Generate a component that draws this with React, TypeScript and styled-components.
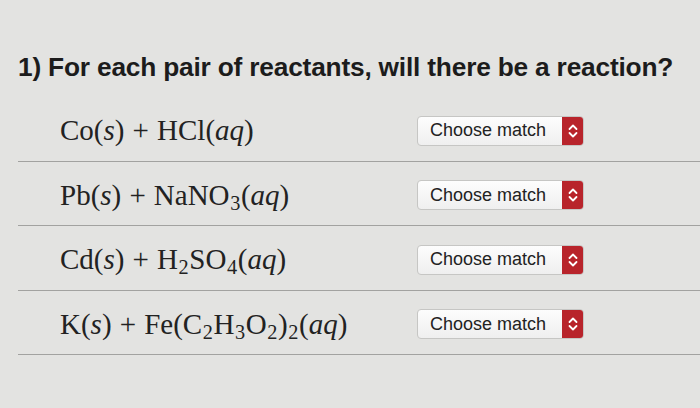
import React from 'react';
import styled, { createGlobalStyle } from 'styled-components';

const GlobalStyle = createGlobalStyle`
  html, body {
    margin: 0;
    padding: 0;
    background: #e3e3e1;
  }
`;

type Part = { t: string; it?: boolean; sub?: boolean; op?: boolean };

const rows: Part[][] = [
  [
    { t: 'Co(' }, { t: 's', it: true }, { t: ')' }, { t: '+', op: true }, { t: 'HCl(' },
    { t: 'aq', it: true }, { t: ')' },
  ],
  [
    { t: 'Pb(' }, { t: 's', it: true }, { t: ')' }, { t: '+', op: true }, { t: 'NaNO' },
    { t: '3', sub: true }, { t: '(' }, { t: 'aq', it: true }, { t: ')' },
  ],
  [
    { t: 'Cd(' }, { t: 's', it: true }, { t: ')' }, { t: '+', op: true }, { t: 'H' },
    { t: '2', sub: true }, { t: 'SO' }, { t: '4', sub: true }, { t: '(' },
    { t: 'aq', it: true }, { t: ')' },
  ],
  [
    { t: 'K(' }, { t: 's', it: true }, { t: ')' }, { t: '+', op: true }, { t: 'Fe(C' },
    { t: '2', sub: true }, { t: 'H' }, { t: '3', sub: true }, { t: 'O' }, { t: '2', sub: true },
    { t: ')' }, { t: '2', sub: true }, { t: '(' }, { t: 'aq', it: true }, { t: ')' },
  ],
];

function Chevrons() {
  return (
    <svg width="12" height="18" viewBox="0 0 12 18" fill="none">
      <path d="M2.5 7 L6 3.5 L9.5 7" stroke="#fff" strokeWidth="1.8" strokeLinecap="round" strokeLinejoin="round" />
      <path d="M2.5 11 L6 14.5 L9.5 11" stroke="#fff" strokeWidth="1.8" strokeLinecap="round" strokeLinejoin="round" />
    </svg>
  );
}

function App() {
  return (
    <Page>
      <GlobalStyle />
      <Title>1) For each pair of reactants, will there be a reaction?</Title>
      <List>
        {rows.map((parts, i) => (
          <Row key={i}>
            <Equation>
              {parts.map((p, j) => {
                if (p.sub) return <Sub key={j}>{p.t}</Sub>;
                if (p.it) return <Var key={j}>{p.t}</Var>;
                if (p.op) return <Op key={j}>{p.t}</Op>;
                return <span key={j}>{p.t}</span>;
              })}
            </Equation>
            <Select>
              <SelectLabel>Choose match</SelectLabel>
              <Arrow>
                <Chevrons />
              </Arrow>
            </Select>
          </Row>
        ))}
      </List>
    </Page>
  );
}

export default App;

const Page = styled.div`
  width: 700px;
  height: 408px;
  box-sizing: border-box;
  padding: 51px 0 0 18px;
  background: #e3e3e1;
  overflow: hidden;
`;

const Title = styled.h1`
  margin: 0;
  font-family: 'Liberation Sans', Arial, sans-serif;
  font-weight: bold;
  font-size: 26.3px;
  line-height: 32px;
  color: #1c1c1c;
  letter-spacing: -0.2px;
`;

const List = styled.div`
  margin-top: 14px;
  display: flex;
  flex-direction: column;
`;

const Row = styled.div`
  height: 64.5px;
  box-sizing: border-box;
  padding-top: 4px;
  display: flex;
  align-items: center;
  border-bottom: 1.5px solid #a2a2a0;
`;

const Equation = styled.div`
  width: 357px;
  padding-left: 42px;
  font-family: 'Liberation Serif', 'Times New Roman', serif;
  font-size: 29px;
  color: #222;
  white-space: nowrap;
`;

const Var = styled.span`
  font-style: italic;
`;

const Op = styled.span`
  margin: 0 0.28em;
`;

const Sub = styled.sub`
  font-size: 0.7em;
  vertical-align: -0.25em;
  line-height: 0;
  margin: 0 0.03em;
`;

const Select = styled.div`
  width: 167px;
  height: 30px;
  box-sizing: border-box;
  display: flex;
  align-items: stretch;
  background: linear-gradient(#fdfdfd, #efefef);
  border: 1px solid #c6c6c4;
  border-radius: 4px;
  overflow: hidden;
`;

const SelectLabel = styled.span`
  flex: 1;
  display: flex;
  align-items: center;
  padding-left: 12px;
  font-family: 'Liberation Sans', Arial, sans-serif;
  font-size: 18px;
  color: #222;
`;

const Arrow = styled.span`
  width: 21px;
  display: flex;
  align-items: center;
  justify-content: center;
  background: #b8242b;
`;
